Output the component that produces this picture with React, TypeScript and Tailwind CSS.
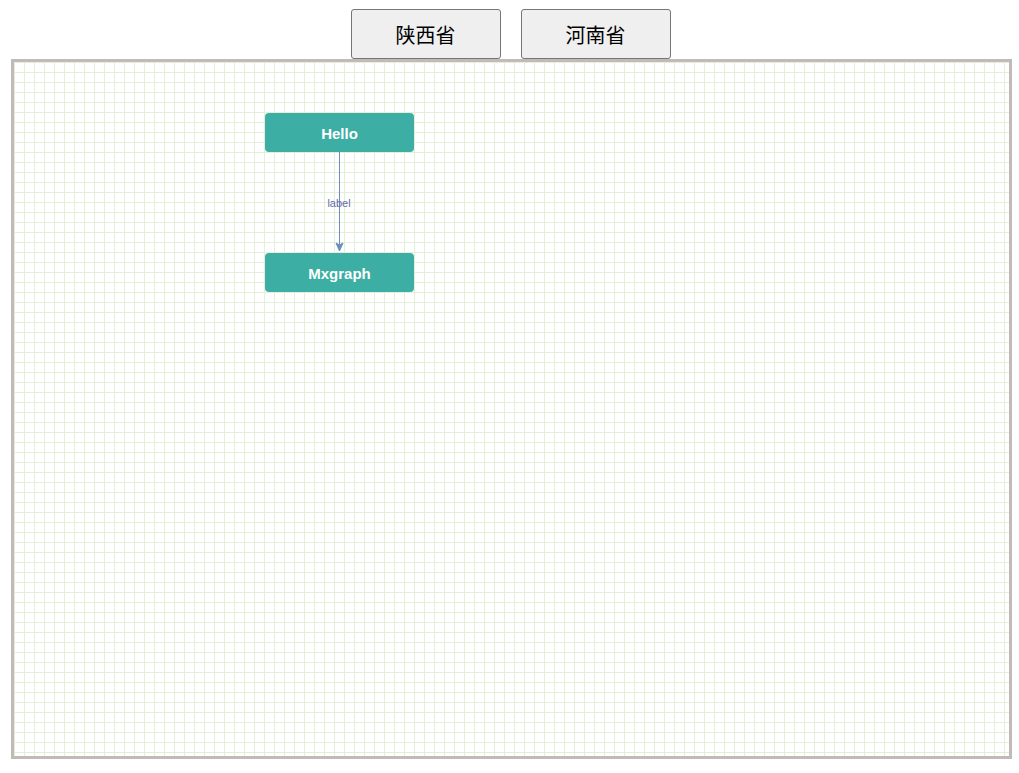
export default function App() {
  return (
    <div className="w-[1019px] h-[773px] bg-white font-['Liberation_Sans',Arial,sans-serif]">
      <div className="flex justify-center gap-[20px] pt-[9px] pl-[2px]">
        <button className="w-[150px] h-[50px] pt-[2px] bg-[#efefef] border border-[#767676] rounded-[3px] text-[20px] text-black font-['Noto_Sans_CJK_SC',sans-serif]">
          陕西省
        </button>
        <button className="w-[150px] h-[50px] pt-[2px] bg-[#efefef] border border-[#767676] rounded-[3px] text-[20px] text-black font-['Noto_Sans_CJK_SC',sans-serif]">
          河南省
        </button>
      </div>

      <div className="relative ml-[11px] w-[1001px] h-[700px] border-[3px] border-[#c2bab9] bg-white [background-image:linear-gradient(to_right,#e3efd9_1px,transparent_1px),linear-gradient(to_bottom,#e3efd9_1px,transparent_1px)] [background-size:10px_10px]">
        {/* Hello node */}
        <div className="absolute left-[251px] top-[51px] w-[149px] h-[39px] pt-[3px] rounded-[4px] bg-[#3caea3] flex items-center justify-center text-white text-[15px] font-bold">
          Hello
        </div>

        {/* edge */}
        <svg className="absolute left-[316px] top-[90px]" width="20" height="102" viewBox="0 0 20 102">
          <line x1="9.5" y1="0" x2="9.5" y2="94" stroke="#6c8ebf" strokeWidth="1" />
          <path d="M6 91 L9.5 99 L13 91 L9.5 93 Z" fill="#6c8ebf" stroke="#6c8ebf" strokeWidth="1" />
        </svg>
        <div className="absolute left-[295px] top-[134px] w-[60px] text-center text-[11px] leading-[14px] text-[#6a6cac]">
          label
        </div>

        {/* Mxgraph node */}
        <div className="absolute left-[251px] top-[191px] w-[149px] h-[39px] pt-[3px] rounded-[4px] bg-[#3caea3] flex items-center justify-center text-white text-[15px] font-bold">
          Mxgraph
        </div>
      </div>
    </div>
  );
}
